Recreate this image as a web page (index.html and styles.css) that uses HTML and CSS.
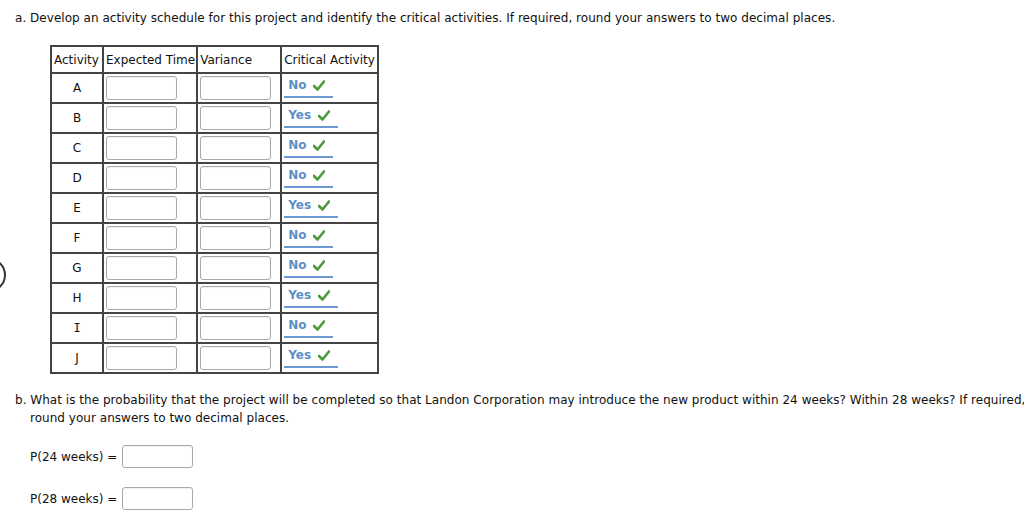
FILE: index.html
```html
<!DOCTYPE html>
<html>
<head>
<meta charset="utf-8">
<link rel="stylesheet" href="styles.css">
</head>
<body>
<div class="page">
  <div class="arc"></div>
  <p class="q">a. Develop an activity schedule for this project and identify the critical activities. If required, round your answers to two decimal places.</p>
  <table class="grid">
    <tr class="head">
      <th class="c-act">Activity</th>
      <th class="c-exp">Expected Time</th>
      <th class="c-var">Variance</th>
      <th class="c-crit">Critical Activity</th>
    </tr>
    <tr><td class="lbl">A</td><td><span class="inp"></span></td><td><span class="inp"></span></td><td><span class="ans">No<svg class="chk" viewBox="0 0 12 11"><path d="M1 6 L4.5 9.5 L11 1.5" /></svg></span></td></tr>
    <tr><td class="lbl">B</td><td><span class="inp"></span></td><td><span class="inp"></span></td><td><span class="ans">Yes<svg class="chk" viewBox="0 0 12 11"><path d="M1 6 L4.5 9.5 L11 1.5" /></svg></span></td></tr>
    <tr><td class="lbl">C</td><td><span class="inp"></span></td><td><span class="inp"></span></td><td><span class="ans">No<svg class="chk" viewBox="0 0 12 11"><path d="M1 6 L4.5 9.5 L11 1.5" /></svg></span></td></tr>
    <tr><td class="lbl">D</td><td><span class="inp"></span></td><td><span class="inp"></span></td><td><span class="ans">No<svg class="chk" viewBox="0 0 12 11"><path d="M1 6 L4.5 9.5 L11 1.5" /></svg></span></td></tr>
    <tr><td class="lbl">E</td><td><span class="inp"></span></td><td><span class="inp"></span></td><td><span class="ans">Yes<svg class="chk" viewBox="0 0 12 11"><path d="M1 6 L4.5 9.5 L11 1.5" /></svg></span></td></tr>
    <tr><td class="lbl">F</td><td><span class="inp"></span></td><td><span class="inp"></span></td><td><span class="ans">No<svg class="chk" viewBox="0 0 12 11"><path d="M1 6 L4.5 9.5 L11 1.5" /></svg></span></td></tr>
    <tr><td class="lbl">G</td><td><span class="inp"></span></td><td><span class="inp"></span></td><td><span class="ans">No<svg class="chk" viewBox="0 0 12 11"><path d="M1 6 L4.5 9.5 L11 1.5" /></svg></span></td></tr>
    <tr><td class="lbl">H</td><td><span class="inp"></span></td><td><span class="inp"></span></td><td><span class="ans">Yes<svg class="chk" viewBox="0 0 12 11"><path d="M1 6 L4.5 9.5 L11 1.5" /></svg></span></td></tr>
    <tr><td class="lbl lbl-i">I</td><td><span class="inp"></span></td><td><span class="inp"></span></td><td><span class="ans">No<svg class="chk" viewBox="0 0 12 11"><path d="M1 6 L4.5 9.5 L11 1.5" /></svg></span></td></tr>
    <tr><td class="lbl">J</td><td><span class="inp"></span></td><td><span class="inp"></span></td><td><span class="ans">Yes<svg class="chk" viewBox="0 0 12 11"><path d="M1 6 L4.5 9.5 L11 1.5" /></svg></span></td></tr>
  </table>
  <p class="q qb">b. What is the probability that the project will be completed so that Landon Corporation may introduce the new product within 24 weeks? Within 28 weeks? If required, round your answers to two decimal places.</p>
  <div class="prob">
    <div class="prow"><span>P(24 weeks) =</span><span class="inp"></span></div>
    <div class="prow"><span>P(28 weeks) =</span><span class="inp"></span></div>
  </div>
</div>
</body>
</html>
```
FILE: styles.css
```css
html, body {
  margin: 0;
  padding: 0;
  background: #fff;
}
body {
  font-family: "DejaVu Sans", Verdana, sans-serif;
  font-size: 12px;
  color: #111;
  overflow: hidden;
}
.page {
  position: relative;
  width: 1024px;
  height: 524px;
  padding: 9px 0 0 15px;
  box-sizing: border-box;
}
.arc {
  position: absolute;
  left: -28px;
  top: 258px;
  width: 30px;
  height: 30px;
  border: 2px solid #333;
  border-radius: 50%;
}
.q {
  margin: 0;
  line-height: 18px;
  white-space: nowrap;
  letter-spacing: 0.03px;
}
.grid {
  margin: 18px 0 0 35px;
  border: 1px solid #444;
  border-spacing: 0;
  border-collapse: separate;
}
.grid th, .grid td {
  border: 1px solid #444;
  padding: 0;
}
.grid th {
  font-weight: normal;
  text-align: left;
  height: 25px;
  padding: 0 1px 0 2px;
  white-space: nowrap;
}
.grid td {
  height: 28px;
}
.c-act { width: 47px; }
.c-exp { width: 89px; }
.c-var { width: 79px; }
.c-crit { width: 92px; }
.lbl {
  text-align: center;
}
.lbl-i {
  font-family: "DejaVu Sans Mono", monospace;
}
.grid .inp {
  margin-left: 2px;
}
.inp {
  display: block;
  width: 71px;
  height: 24px;
  box-sizing: border-box;
  border: 1px solid #a9a9a9;
  border-radius: 3px;
  background: #fff;
  box-shadow: inset 0 1px 1px rgba(0,0,0,0.06);
}
.ans {
  display: inline-flex;
  align-items: center;
  gap: 7px;
  margin: 0 0 2px 2px;
  padding: 0 8px 2px 4px;
  border-bottom: 2px solid #6a9ad0;
  color: #5b8fc8;
  font-weight: bold;
  font-size: 12px;
  line-height: 17px;
}
.chk {
  width: 12px;
  height: 11px;
  fill: none;
  stroke: #4c9a3c;
  stroke-width: 2.6;
  stroke-linecap: round;
  stroke-linejoin: round;
}
.qb {
  margin-top: 17px;
  white-space: normal;
  width: 1000px;
  padding-left: 15px;
  text-indent: -15px;
}
.prob {
  display: flex;
  flex-direction: column;
  gap: 19px;
  margin: 18px 0 0 15px;
}
.prow {
  display: flex;
  align-items: center;
  gap: 5px;
}
.prow .inp {
  display: inline-block;
  height: 23px;
}
```
